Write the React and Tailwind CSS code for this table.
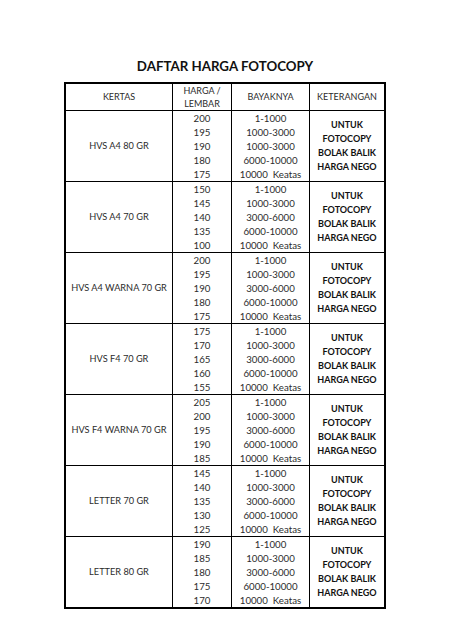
import React from 'react';

const ranges = ['1-1000', '1000-3000', '3000-6000', '6000-10000', '10000  Keatas'];

const groups = [
  { name: 'HVS A4 80 GR', prices: [200, 195, 190, 180, 175], ranges: ['1-1000', '1000-3000', '1000-3000', '6000-10000', '10000  Keatas'] },
  { name: 'HVS A4 70 GR', prices: [150, 145, 140, 135, 100] },
  { name: 'HVS A4 WARNA 70 GR', prices: [200, 195, 190, 180, 175] },
  { name: 'HVS F4 70 GR', prices: [175, 170, 165, 160, 155] },
  { name: 'HVS F4 WARNA 70 GR', prices: [205, 200, 195, 190, 185] },
  { name: 'LETTER 70 GR', prices: [145, 140, 135, 130, 125] },
  { name: 'LETTER 80 GR', prices: [190, 185, 180, 175, 170] },
];

const cols = 'grid grid-cols-[107px_59px_78px_74px]';

function Group({ group, last }) {
  const rows = group.ranges || ranges;
  return (
    <div className={`${cols} ${last ? 'h-[70px]' : 'h-[71px] border-b border-black'}`}>
      <div className="flex items-center justify-center border-r border-black whitespace-nowrap text-[9.2px]">{group.name}</div>
      <div className="flex flex-col border-r border-black">
        {group.prices.map((p, i) => (
          <div key={i} className="h-[14px] leading-[14px] text-center">{p}</div>
        ))}
      </div>
      <div className="flex flex-col border-r border-black">
        {rows.map((r, i) => (
          <div key={i} className="h-[14px] leading-[14px] text-center whitespace-pre">{r}</div>
        ))}
      </div>
      <div className="flex flex-col items-center justify-center font-bold leading-[14px] text-[9px] text-[#111]">
        <div>UNTUK</div>
        <div>FOTOCOPY</div>
        <div>BOLAK BALIK</div>
        <div>HARGA NEGO</div>
      </div>
    </div>
  );
}

export default function App() {
  return (
    <div className="w-[451px] h-[640px] bg-white text-[#2b2b2b] font-['Lato',sans-serif] text-[9.7px]">
      <div className="pt-[58px] pl-[64px] w-[386px]">
        <div className="h-[16px] leading-[16px] text-center text-[13.3px] font-bold text-[#111] mb-[8px]">DAFTAR HARGA FOTOCOPY</div>
      </div>
      <div className="ml-[64px] w-[322px] border-2 border-black">
        <div className={`${cols} h-[27px] border-b border-black text-[9px]`}>
          <div className="flex items-center justify-center border-r border-black">KERTAS</div>
          <div className="flex flex-col items-center justify-center border-r border-black leading-[13px]">
            <div>HARGA /</div>
            <div>LEMBAR</div>
          </div>
          <div className="flex items-center justify-center border-r border-black">BAYAKNYA</div>
          <div className="flex items-center justify-center">KETERANGAN</div>
        </div>
        {groups.map((g, i) => (
          <Group key={i} group={g} last={i === groups.length - 1} />
        ))}
      </div>
    </div>
  );
}
